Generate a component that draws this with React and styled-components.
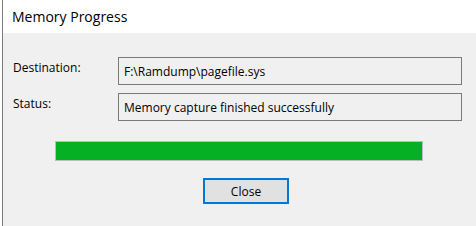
import React from 'react';
import styled, { createGlobalStyle } from 'styled-components';

const Global = createGlobalStyle`
	html, body {
		margin: 0;
		padding: 0;
		background: #ffffff;
		overflow: hidden;
	}
`;

const Screen = styled.div`
	width: 476px;
	height: 226px;
	display: flex;
	background: #ffffff;
	padding-left: 2px;
	box-sizing: border-box;
`;

const Window = styled.div`
	flex: 1;
	display: flex;
	flex-direction: column;
	border-left: 1px solid #7a7a7a;
	font-family: 'Segoe UI', 'Open Sans', 'Noto Sans', sans-serif;
	color: #000;
`;

const TitleBar = styled.div`
	height: 33px;
	background: #ffffff;
	display: flex;
	align-items: center;
	padding-left: 9px;
	font-size: 14px;
	color: #000;
`;

const Body = styled.div`
	flex: 1;
	background: #f0f0f0;
	display: flex;
	flex-direction: column;
	align-items: flex-start;
	padding: 24px 0 0 10px;
`;

const Row = styled.div`
	display: flex;
	align-items: center;
	margin-bottom: ${(p) => p.$gap || 0}px;
`;

const Label = styled.div`
	width: 105px;
	font-size: 12px;
	padding-bottom: 8px;
`;

const Field = styled.div`
	width: 344px;
	height: 28px;
	box-sizing: border-box;
	border: 1px solid #7a7a7a;
	display: flex;
	align-items: center;
	padding-left: 5px;
	font-size: 12px;
`;

const Progress = styled.div`
	width: 368px;
	height: 20px;
	box-sizing: border-box;
	margin: 12px 0 0 42px;
	border: 1px solid #bcbcbc;
	background: #e6e6e6;
`;

const Fill = styled.div`
	height: 100%;
	background: #06b025;
`;

const Button = styled.button`
	width: 86px;
	height: 26px;
	margin: 17px 0 0 190px;
	box-sizing: border-box;
	border: 2px solid #0078d7;
	background: #e1e1e1;
	font-family: inherit;
	font-size: 12px;
	color: #000;
	padding: 0;
`;

export default function App() {
	const percent = 100;
	return (
		<Screen>
			<Global />
			<Window>
				<TitleBar>Memory Progress</TitleBar>
				<Body>
					<Row $gap={8}>
						<Label>Destination:</Label>
						<Field>F:\Ramdump\pagefile.sys</Field>
					</Row>
					<Row $gap={8}>
						<Label>Status:</Label>
						<Field>Memory capture finished successfully</Field>
					</Row>
					<Progress>
						<Fill style={{ width: `${percent}%` }} />
					</Progress>
					<Button>Close</Button>
				</Body>
			</Window>
		</Screen>
	);
}
